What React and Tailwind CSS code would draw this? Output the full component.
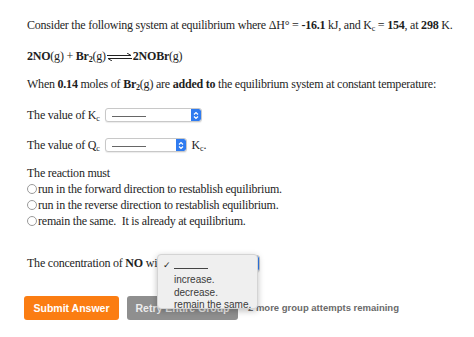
import React from 'react';

const serif = { fontFamily: '"Liberation Serif", "Times New Roman", serif' };
const sans = { fontFamily: '"Liberation Sans", Arial, sans-serif' };

function Sel({ width, tall = false }) {
  return (
    <span className={`inline-flex items-center ${tall ? 'h-[17px]' : 'h-[14px]'} ${width} align-middle rounded-[3px] border border-[#c8c8c8] bg-white shadow-[0_1px_1px_rgba(0,0,0,0.08)] overflow-hidden`}>
      <span className="flex-1 pl-[6px] pt-[3px] flex items-center">
        <span className="block w-[34px] h-[1px] bg-[#666]" />
      </span>
      <span className="w-[10px] h-full bg-[#2f7bf0] flex items-center justify-center rounded-r-[2px]">
        <svg width="6" height="9" viewBox="0 0 6 9" fill="none" stroke="white" strokeWidth="1.2">
          <path d="M1 3.5 L3 1.5 L5 3.5" />
          <path d="M1 5.5 L3 7.5 L5 5.5" />
        </svg>
      </span>
    </span>
  );
}

function Radio({ children }) {
  return (
    <div className="flex items-center h-[16px]">
      <span className="w-[10px] h-[10px] rounded-full border border-[#9a9a9a] bg-white mr-[1px] shrink-0" />
      <span>{children}</span>
    </div>
  );
}

function Arrow() {
  return (
    <svg width="27" height="8" viewBox="0 0 27 8" className="inline-block align-middle" fill="none" stroke="#222" strokeWidth="1">
      <path d="M1 2.5 H25 L21 0" />
      <path d="M26 5.5 H2 L6 8" />
    </svg>
  );
}

const Sub = ({ children }) => <sub className="text-[8px]">{children}</sub>;

export default function App() {
  return (
    <div className="w-[474px] h-[337px] bg-white relative overflow-hidden text-[12px] text-[#1e1e1e] tracking-[-0.22px]" style={serif}>
      <div className="pl-[27px] pt-[17px] leading-[16px]">
        <p className="h-[16px]">
          Consider the following system at equilibrium where ΔH° = <b>-16.1</b> kJ, and K<Sub>c</Sub> = <b>154</b>, at <b>298</b> K.
        </p>
        <p className="mt-[15px] h-[16px]">
          <b>2NO</b>(g) + <b>Br<Sub>2</Sub></b>(g)<Arrow /><b>2NOBr</b>(g)
        </p>
        <p className="mt-[12px] h-[16px]">
          When <b>0.14</b> moles of <b>Br<Sub>2</Sub></b>(g) are <b>added to</b> the equilibrium system at constant temperature:
        </p>
        <div className="mt-[15px] flex items-center h-[16px]">
          <span>The value of K<Sub>c</Sub></span>
          <span className="ml-[5px] flex"><Sel width="w-[97px]" /></span>
        </div>
        <div className="mt-[14px] flex items-center h-[16px]">
          <span>The value of Q<Sub>c</Sub></span>
          <span className="ml-[5px] flex"><Sel width="w-[82px]" /></span>
          <span className="ml-[5px]">K<Sub>c</Sub>.</span>
        </div>
        <p className="mt-[12px] h-[16px]">The reaction must</p>
        <Radio>run in the forward direction to restablish equilibrium.</Radio>
        <Radio>run in the reverse direction to restablish equilibrium.</Radio>
        <Radio>remain the same.&nbsp; It is already at equilibrium.</Radio>
        <div className="mt-[26px] flex items-center h-[16px]">
          <span className="whitespace-nowrap">The concentration of <b>NO</b> will</span>
          <span className="ml-[4px] flex"><Sel width="w-[93px]" tall /></span>
        </div>
        <div className="mt-[25px] flex items-center -ml-[3px]" style={sans}>
          <button className="w-[95px] h-[24px] rounded-[3px] bg-[#fb7d12] text-white text-[10.5px] font-bold tracking-normal">
            Submit Answer
          </button>
          <button className="ml-[8px] w-[111px] h-[24px] rounded-[3px] bg-[#8f8f8f] text-[#ececec] text-[10.5px] font-bold tracking-normal">
            Retry Entire Group
          </button>
          <span className="ml-[10px] text-[9.5px] font-bold text-[#6a6a6a] tracking-normal">2 more group attempts remaining</span>
        </div>
      </div>

      <div className="absolute left-[157px] top-[254px] w-[101px] h-[55px] rounded-[4px] bg-[#efefef] border border-[#d4d4d4] shadow-[0_2px_6px_rgba(0,0,0,0.25)] text-[10px] text-[#3a3a3a] leading-[12.5px] pt-[4px] tracking-normal" style={sans}>
        <div className="flex items-center h-[13px]">
          <span className="w-[16px] pl-[5px] text-[9px] text-[#222]">✓</span>
          <span className="block w-[34px] h-[1px] bg-[#444] mt-[5px]" />
        </div>
        <div className="pl-[16px] mt-[2px]">increase.</div>
        <div className="pl-[16px]">decrease.</div>
        <div className="pl-[16px]">remain the same.</div>
      </div>
    </div>
  );
}
